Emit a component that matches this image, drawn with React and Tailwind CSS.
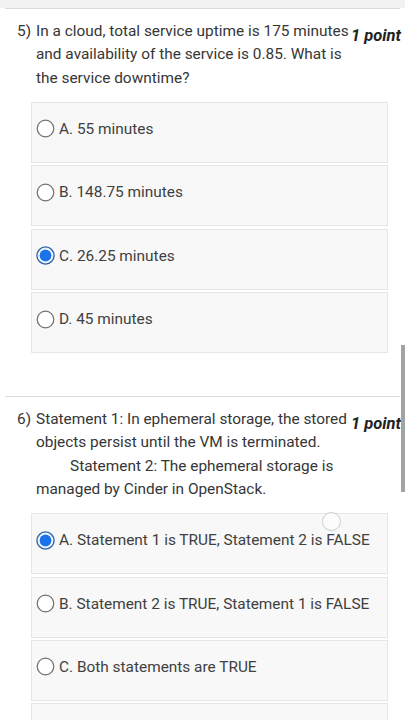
import React from "react";

function Radio({checked}){
    if(checked){
        return(
            <svg width="19" height="19" viewBox="0 0 19 19" className="shrink-0">
                <circle cx="9.5" cy="9.5" r="8.6" fill="#e3edfb" stroke="#2a5fa8" strokeWidth="1.3" />
                <circle cx="9.5" cy="9.5" r="6.9" fill="#ffffff" />
                <circle cx="9.5" cy="9.5" r="5.9" fill="#1a73e8" />
            </svg>
        )
    }
    return(
        <svg width="19" height="19" viewBox="0 0 19 19" className="shrink-0">
            <circle cx="9.5" cy="9.5" r="8.3" fill="#ffffff" stroke="#6f6f6f" strokeWidth="1.2" />
        </svg>
    )
}

function Option({label,checked}){
    return(
        <div className="h-[61px] bg-[#f8f8f8] border border-[#e6e6e6] pl-[4px] pt-[15px]">
            {label && (
                <div className="flex items-center gap-[4px] text-[15.4px] leading-[22px] text-[#404040]">
                    <Radio checked={checked} />
                    <span>{label}</span>
                </div>
            )}
        </div>
    )
}

function Question({num,lines,options}){
    return(
        <div className="pt-[11px]">
            <div className="flex pl-[12px] text-[15.4px] leading-[23.3px] text-[#363636]">
                <div className="w-[19px] shrink-0">{num})</div>
                <div className="flex-1 min-w-0">
                    {lines.map((l,i)=>(
                        <div key={i} className={`whitespace-nowrap ${l.indent?'pl-[34px]':''}`}>{l.text}</div>
                    ))}
                </div>
                <div className="shrink-0 w-[49px] pt-[4px] italic font-bold text-[16.5px] text-[#222222] whitespace-nowrap">1 point</div>
            </div>
            <div className="ml-[26px] w-[357px] mt-[12px] flex flex-col gap-[2.4px]">
                {options.map((o,i)=>(
                    <Option key={i} label={o.label} checked={o.checked} />
                ))}
            </div>
        </div>
    )
}

export default function App(){
    const q5=[
        {label:'A. 55 minutes'},
        {label:'B. 148.75 minutes'},
        {label:'C. 26.25 minutes',checked:true},
        {label:'D. 45 minutes'},
    ]
    const q6=[
        {label:'A. Statement 1 is TRUE, Statement 2 is FALSE',checked:true},
        {label:'B. Statement 2 is TRUE, Statement 1 is FALSE'},
        {label:'C. Both statements are TRUE'},
        {label:''},
    ]
    return(
        <div className="relative w-[405px] h-[720px] overflow-hidden bg-white" style={{fontFamily:'Roboto, "Noto Sans", sans-serif'}}>
            <div className="h-[8px] bg-[#f2f2f2]"></div>
            <div className="mx-[5px] border-t border-[#dcdcdc] h-[388px]">
                <Question
                    num="5"
                    lines={[
                        {text:'In a cloud, total service uptime is 175 minutes'},
                        {text:'and availability of the service is 0.85. What is'},
                        {text:'the service downtime?'},
                    ]}
                    options={q5}
                />
            </div>
            <div className="mx-[5px] border-t border-[#dcdcdc]">
                <Question
                    num="6"
                    lines={[
                        {text:'Statement 1: In ephemeral storage, the stored'},
                        {text:'objects persist until the VM is terminated.'},
                        {text:'Statement 2: The ephemeral storage is',indent:true},
                        {text:'managed by Cinder in OpenStack.'},
                    ]}
                    options={q6}
                />
            </div>
            {/* ghost radio */}
            <div className="absolute left-[322px] top-[512px] w-[19px] h-[19px] rounded-full border border-[#c9cdd3] bg-white/60"></div>
            {/* scrollbar */}
            <div className="absolute left-[401px] top-[345px] w-[4px] h-[147px] bg-[#a3a3a3]"></div>
        </div>
    )
}
